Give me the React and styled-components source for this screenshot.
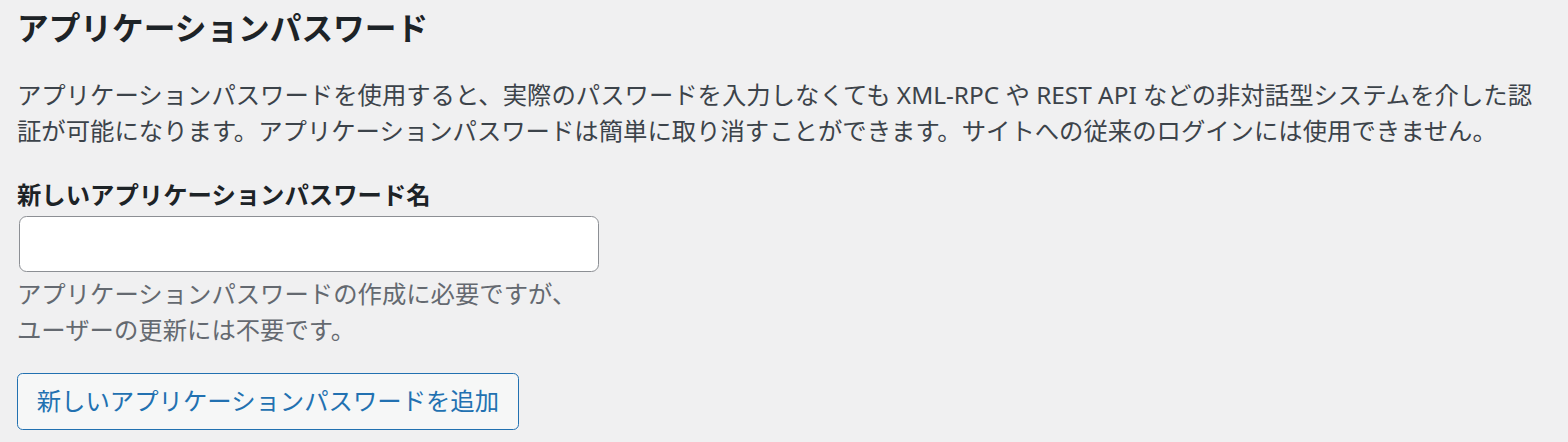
import React from 'react';
import styled, { createGlobalStyle } from 'styled-components';

// everything is WordPress admin sizes scaled by the page zoom
const Z = 1.875;
const px = (v) => `${(v * Z).toFixed(3)}px`;

const GlobalStyle = createGlobalStyle`
  html, body {
    margin: 0;
    padding: 0;
    background: #f0f0f1;
  }
  body {
    font-family: "Noto Sans", "Noto Sans CJK JP", sans-serif;
    font-size: ${px(13)};
    line-height: 1.4;
    color: #3c434a;
  }
`;

const Section = styled.div`
  padding: 0 ${px(13)} 0 17px;
  display: flow-root;
  margin-top: -20.7px;
`;

const Title = styled.h2`
  font-size: ${px(16.9)};
  font-weight: 700;
  line-height: ${px(18.2)};
  margin: ${px(16.9)} 0;
  color: #1d2327;
`;

const Intro = styled.p`
  font-size: ${px(13)};
  line-height: 1.5;
  margin: ${px(13)} 0;
  color: #3c434a;
`;

const FormField = styled.div`
  margin: ${px(13)} 0;
  padding: 0;
`;

const Label = styled.label`
  display: block;
  padding: ${px(2)} 0;
  font-weight: 700;
  line-height: ${px(18.2)};
  color: #1d2327;
`;

const Input = styled.input`
  display: block;
  box-sizing: border-box;
  width: 580px;
  height: ${px(30)};
  margin: 0 ${px(1)};
  padding: 0 ${px(8)};
  border: ${px(1)} solid #8c8f94;
  border-radius: ${px(4)};
  background: #fff;
  font: inherit;
  color: #2c3338;
  outline: none;
`;

const Description = styled.p`
  margin: ${px(2)} 0 ${px(5)};
  font-size: ${px(13)};
  line-height: 1.5;
  color: #646970;
`;

const Button = styled.button`
  display: inline-flex;
  align-items: center;
  box-sizing: border-box;
  height: ${px(30)};
  padding: 0 ${px(10)};
  border: ${px(1)} solid #2271b1;
  border-radius: ${px(3)};
  background: #f6f7f7;
  color: #2271b1;
  font: inherit;
  cursor: pointer;
  white-space: nowrap;
`;

export default function App() {
  return (
    <>
      <GlobalStyle />
      <Section>
        <Title>アプリケーションパスワード</Title>
        <Intro>
          アプリケーションパスワードを使用すると、実際のパスワードを入力しなくても XML-RPC や REST API などの非対話型システムを介した認証が可能になります。アプリケーションパスワードは簡単に取り消すことができます。サイトへの従来のログインには使用できません。
        </Intro>
        <FormField>
          <Label htmlFor="new_application_password_name">新しいアプリケーションパスワード名</Label>
          <Input type="text" id="new_application_password_name" />
          <Description>
            アプリケーションパスワードの作成に必要ですが、
            <br />
            ユーザーの更新には不要です。
          </Description>
        </FormField>
        <Button type="button">新しいアプリケーションパスワードを追加</Button>
      </Section>
    </>
  );
}
